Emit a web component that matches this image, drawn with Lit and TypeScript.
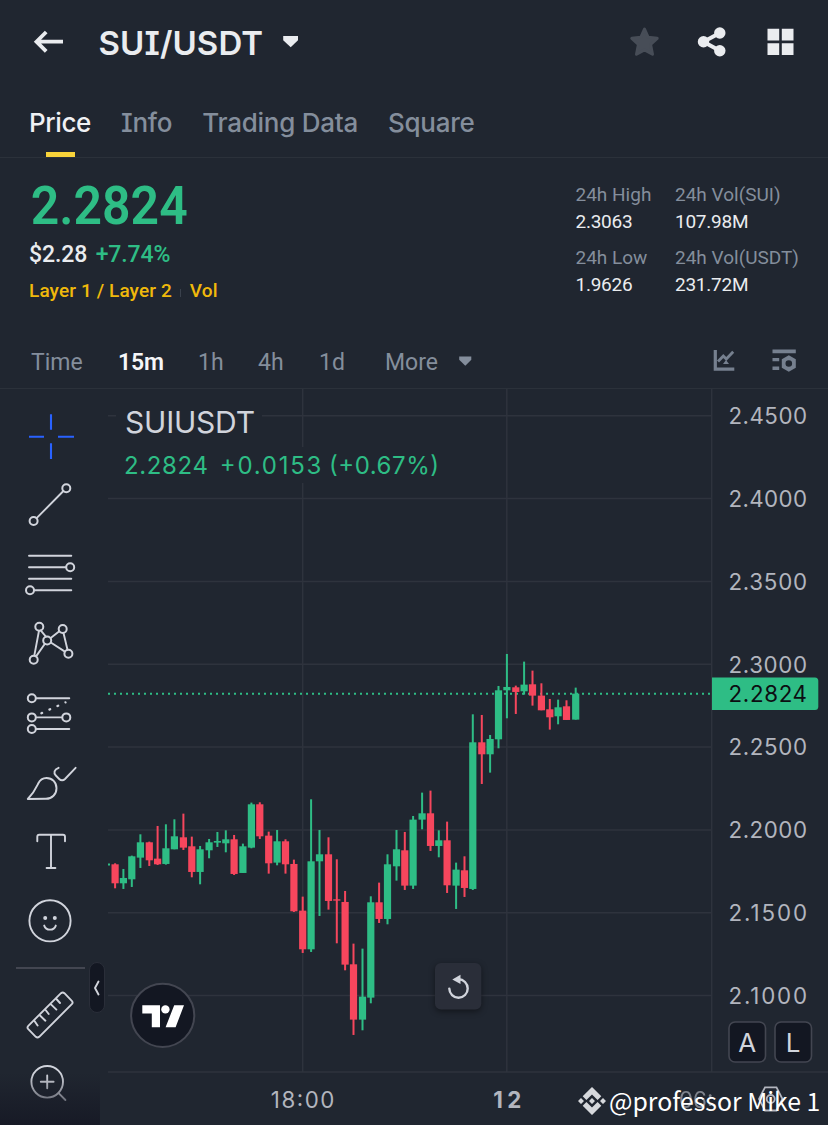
import { LitElement, html, svg, css } from "lit";
import { customElement } from "lit/decorators.js";

type Candle = [number, number, number, number, number, number];

// x centre, high, body top, body bottom, low, direction.
// Vertical values are in thirds of a pixel below the 2.23 price level.
const CANDLES: Candle[] = [
  [115, 249, 252, 309, 324, 0], [123.3, 266, 293, 309, 326, 1], [131.7, 226, 228, 297, 320, 1],
  [140.3, 162, 186, 232, 263, 1], [149.2, 184, 186, 240, 257, 0], [157.5, 137, 235, 252, 254, 0],
  [165.8, 132, 204, 251, 253, 1], [174.3, 117, 168, 207, 207, 1], [183.3, 100, 171, 202, 209, 0],
  [191.7, 169, 198, 275, 291, 0], [200, 197, 207, 275, 312, 1], [209, 176, 186, 210, 234, 1],
  [217.3, 155, 182, 187, 200, 1], [225.7, 150, 177, 189, 216, 1], [234, 164, 177, 281, 284, 0],
  [242.8, 190, 198, 278, 278, 1], [251.3, 67, 72, 202, 204, 1], [259.7, 66, 72, 168, 176, 0],
  [268.6, 154, 166, 249, 280, 0], [277, 149, 183, 247, 255, 1], [285.4, 177, 183, 252, 280, 0],
  [293.8, 238, 251, 393, 395, 0], [302.6, 349, 391, 507, 518, 0], [311, 57, 243, 507, 515, 1],
  [319.4, 149, 222, 243, 407, 1], [328.4, 171, 222, 362, 388, 0], [336.7, 237, 357, 361, 489, 0],
  [345, 332, 365, 553, 570, 0], [353.4, 490, 552, 718, 764, 0], [362.4, 505, 649, 718, 750, 1],
  [370.7, 348, 366, 652, 669, 1], [379, 307, 366, 416, 428, 0], [387.4, 222, 252, 416, 432, 1],
  [396.4, 149, 207, 258, 301, 1], [404.7, 155, 210, 316, 329, 0], [413, 107, 118, 316, 326, 1],
  [422, 37, 99, 118, 147, 1], [430.4, 31, 99, 197, 212, 0], [438.7, 150, 180, 197, 231, 1],
  [447, 124, 180, 315, 338, 0], [456, 247, 268, 316, 386, 1], [464.4, 228, 270, 323, 350, 0],
  [472.7, -198, -114, 326, 329, 1], [481.7, -196, -114, -78, 11, 0], [490, -136, -124, -78, -23, 1],
  [498.4, -283, -270, -123, -96, 1], [506.8, -379, -280, -270, -186, 1], [515.7, -284, -279, -265, -199, 0],
  [524, -356, -287, -267, -257, 1], [532.4, -329, -288, -254, -224, 0], [541.3, -291, -254, -210, -210, 0],
  [549.7, -244, -213, -189, -152, 0], [558, -242, -219, -192, -168, 1], [566.4, -240, -222, -181, -181, 0],
  [575.6, -278, -260, -182, -182, 1],
];

const PRICES = ["2.4500", "2.4000", "2.3500", "2.3000", "2.2500", "2.2000", "2.1500", "2.1000"];
const gridY = (i: number) => 415.7 + i * 82.84;
const level = (v: number) => 780.3 + v / 3;

const node = (x: number, y: number) => svg`<circle class="node" cx=${x} cy=${y} r="4"/>`;

const TOOLS = [
  svg`<path class="active" d="M51 414.3V429.7M51 443.3V459M29 436.7H44M58 436.7H74"/>`,
  svg`<path d="M36.6 518.2L63.4 491"/>${node(66.3, 488.2)}${node(33.6, 521)}`,
  svg`<path d="M29 555.7H71.3M29 567.3H66M29 578.8H71.3M34 590.3H71.3"/>${node(70.2, 567.3)}${node(30, 590.3)}`,
  svg`<path d="M39 630.7L34.3 655.6M36.1 656.4L44.9 643.7M40.7 630.4L45.9 636.6M50.7 638L59.3 631.3M63.5 633L67.5 649.7M50.8 642.5L64.9 651.6"/>
    ${node(39.3, 626.8)}${node(62.7, 629)}${node(47.2, 640.5)}${node(68.4, 653.7)}${node(33.7, 659.8)}`,
  svg`<path d="M36 698.3H69.3M36 717.4H62M36 729H69.3"/><path class="dots" d="M41.4 713.2L65.5 702.4"/>
    ${node(31.8, 698.3)}${node(31.8, 717.4)}${node(66.3, 717.4)}${node(31.8, 729)}`,
  svg`<path d="M27.8 799C34.5 792 36.5 787 38.2 783.5C40 779.7 43 778 46.5 778C52.3 778 56.5 782.5 56.5 788.2C56.5 794.2 52 798.8 46 798.8ZM58.6 767.8C54 769.6 53.4 773 55.8 775.5L59.2 779C61 780.8 63.3 780.7 65 779L75.6 767.8"/>`,
  svg`<path d="M37.3 841.2V836.8Q37.3 834.8 39.3 834.8H63Q65 834.8 65 836.8V841.2M51 834.8V868M46.6 868H55.4"/>`,
  svg`<circle cx="50" cy="920.8" r="20.6"/><path d="M44.2 925.6C46 931 54 931 55.8 925.6"/>
    <circle class="solid" cx="45.2" cy="918" r="2"/><circle class="solid" cx="54.8" cy="918" r="2"/>`,
];

const LOWER_TOOLS = [
  svg`<path d="M61 993.2Q62.7 991.6 64.4 993.2L71.8 1000.8Q73.4 1002.5 71.8 1004.2L39.2 1036.8Q37.5 1038.4 35.8 1036.8L28.3 1029.2Q26.7 1027.5 28.3 1025.8ZM34.5 1021L37.6 1025.5M40 1015.5L45.4 1020.7M45.6 1010L48.7 1014M51 1004.4L56.4 1009.6M56.4 999L60 1003"/>`,
  svg`<circle cx="47.2" cy="1081.8" r="15.8"/><path d="M40.8 1081.8H53.6M47.2 1075.4V1088.2M58.6 1093.2L65.4 1100"/>`,
];

@customElement("app-root")
export class AppRoot extends LitElement {
  static styles = css`
    :host {
      display: block;
      width: 828px;
      height: 1125px;
      overflow: hidden;
      position: relative;
      background: #202630;
      color: #eaecef;
      font-family: Inter, Roboto, sans-serif;
      font-feature-settings: "cv08" 1;
      white-space: nowrap;
    }
    * { box-sizing: border-box; }
    svg { display: block; flex: none; }
    .header { display: flex; align-items: center; height: 84px; padding: 0 33.5px 0 33px; margin-bottom: 1px; }
    .back { margin-right: 34.5px; }
    .pair { font-size: 33px; font-weight: 600; letter-spacing: 0.1px; width: 184.5px; line-height: 40px; padding-top: 2px; }
    .actions { display: flex; align-items: center; margin-left: auto; }
    .star { margin-right: 37px; }
    .share { margin-right: 39.5px; }
    .tabs { display: flex; height: 73px; padding: 0 29px; gap: 30px; border-bottom: 1.5px solid #2b313a; }
    .tab { position: relative; font-size: 26px; line-height: 76px; font-weight: 500; letter-spacing: -0.25px; color: #848e9c; }
    .first { letter-spacing: -0.4px; color: #f0f1f4; }
    .first::after { content: ""; position: absolute; left: 16.5px; bottom: 0; width: 29px; height: 5px; background: #f8d33a; }
    .summary { display: flex; justify-content: space-between; height: 178px; padding: 18px 29px 0; font-family: Roboto, sans-serif; }
    .last { font-size: 54px; line-height: 60px; font-weight: 600; color: #2ebd85; transform: scaleX(0.925); transform-origin: 24px 50%; }
    .fiat { display: flex; gap: 8.5px; font-size: 23px; line-height: 38px; font-weight: 500; letter-spacing: -0.1px; }
    .up { color: #2ebd85; }
    .tags { display: flex; align-items: center; font-size: 19px; line-height: 34px; font-weight: 500; letter-spacing: 0.12px; color: #f0b90b; }
    .rule { width: 1px; height: 8px; background: #3a414c; margin: 3px 8.5px 0; }
    .stats { display: grid; grid-template-columns: 99.5px 124px; grid-auto-rows: 63px; padding-top: 5px; }
    .stat { font-size: 19px; line-height: 27px; letter-spacing: -0.25px; }
    .name { color: #848e9c; letter-spacing: 0; }
    .intervals { display: flex; align-items: center; height: 53px; padding: 0 31px; font-family: Roboto, sans-serif; font-size: 23px; color: #848e9c; border-bottom: 1.5px solid #2b313a; }
    .w1 { width: 87px; } .w2 { width: 80px; color: #f5f6f8; font-weight: 600; letter-spacing: -0.2px; } .w3 { width: 60px; } .w4 { width: 61px; } .w5 { width: 66px; } .w6 { width: 74px; }
    .drop { margin-bottom: 3px; }
    .modes { display: flex; gap: 37px; margin-left: auto; margin-bottom: 3px; align-items: center; }
    .workspace { display: flex; height: 736px; }
    .tools { width: 108px; height: 736px; padding-top: 13px; position: relative; }
    .tools svg { fill: none; stroke: #d1d4dc; stroke-width: 1.9; stroke-linecap: round; stroke-linejoin: round; }
    .tools .node { stroke-width: 2; }
    .tools .active { stroke: #2962ff; stroke-linecap: butt; stroke-width: 2.1; }
    .tools .dots { stroke-dasharray: 0.8 8; stroke-width: 2.3; }
    .tools .solid { fill: #d1d4dc; stroke: none; }
    .divider { width: 69px; height: 2px; background: #434651; margin: 13px 0 10px 16px; }
    .fade { position: absolute; left: 0; bottom: 0; width: 100px; height: 52px; background: linear-gradient(rgba(19, 23, 34, 0), #171a26); }
    .collapse { position: absolute; left: 89px; top: 573px; width: 16px; height: 51px; border: 1.5px solid #2a2e39; border-radius: 8px; background: #131722; display: flex; align-items: center; justify-content: center; }
    .chart { font-family: Inter, sans-serif; }
    .grid { stroke: #2e333d; stroke-width: 1.5; fill: none; }
    .bg { fill: #202630; }
    .rise { fill: #2ebd85; }
    .fall { fill: #f6465d; }
    .axis { font-size: 22.3px; fill: #b2b5be; }
    .strong { font-weight: 700; }
    .symbol { font-size: 30px; fill: #d1d4dc; font-feature-settings: normal; }
    .change { font-size: 24px; fill: #2ebd85; }
    .quote { stroke: #2ebd85; stroke-width: 2; stroke-dasharray: 2 4; }
    .onquote { font-size: 22.3px; fill: #0c0e12; }
    .key { fill: #131722; stroke: #434651; stroke-width: 1.6; }
    .keytext { font-size: 26px; fill: #d1d4dc; text-anchor: middle; }
    .reload { fill: #2a2e39; filter: drop-shadow(0 2px 3px rgba(0, 0, 0, 0.45)); }
    .reload-icon { fill: none; stroke: #d1d4dc; stroke-width: 2.4; stroke-linecap: round; }
    .light { fill: #d1d4dc; }
    .white { fill: #fff; }
    .logo { fill: #131722; stroke: #434651; stroke-width: 2; }
    .gear { fill: none; stroke: #b2b5be; stroke-width: 1.8; }
    .credit { position: absolute; left: 578px; top: 1080px; height: 40px; display: flex; align-items: center; gap: 3px; color: #fff; font-family: "Noto Sans CJK SC", sans-serif; font-size: 24.8px; line-height: 40px; }
    .mark { margin-top: 2px; }
  `;

  private header() {
    return html`<div class="header">
      <svg class="back" width="31" height="26" viewBox="33 29 31 26" fill="none" stroke="#eaecef" stroke-width="3.8"><path d="M63 41.7H37M46.2 32L36.5 41.7L46.2 51.4"/></svg>
      <div class="pair">SUI/USDT</div>
      <svg width="16" height="14" viewBox="283 35 16 14" fill="#eaecef"><path d="M283.2 36H298V40.3L290.7 47.3L283.2 40.3Z"/></svg>
      <div class="actions">
        <svg class="star" width="31" height="30" viewBox="629.5 27.5 31 30" fill="#474d57" stroke="#474d57" stroke-width="3" stroke-linejoin="round"><path d="M645 29.5L648.7 37.8L657.7 38.8L651.1 45L653 54.8L645 50.4L637 54.8L638.9 45L632.3 38.8L641.3 37.8Z"/></svg>
        <svg class="share" width="30" height="30" viewBox="697 27.5 30 30" fill="#eaecef"><circle cx="703.5" cy="42.3" r="5.7"/><circle cx="719.8" cy="33.5" r="5.7"/><circle cx="719.8" cy="51.3" r="5.7"/><path d="M719.8 33.5L703.5 42.3L719.8 51.3" fill="none" stroke="#eaecef" stroke-width="4"/></svg>
        <svg width="28" height="28" viewBox="766.5 28.5 28 28" fill="#eaecef"><path d="M767 29.2h11.7v11.7h-11.7zM781.3 29.2h11.7v11.7h-11.7zM767 43.7h11.7v11.7h-11.7zM781.3 43.7h11.7v11.7h-11.7z"/></svg>
      </div>
    </div>`;
  }

  private stat(name: string, value: string) {
    return html`<div class="stat"><div class="name">${name}</div><div>${value}</div></div>`;
  }

  private tool(icon: unknown, top: number) {
    return html`<svg width="100" height="69" viewBox="0 ${top} 100 69">${icon}</svg>`;
  }

  private chart() {
    return html`<svg class="chart" width="720" height="736" viewBox="108 389 720 736">
      <path class="grid" d="M302.7 389V1072M506.8 389V1072M711.7 389V1072M108 1072H828"/>
      ${PRICES.map((_, i) => svg`<path class="grid" d="M108 ${gridY(i)}H712"/>`)}
      <rect class="bg" x="116" y="405" width="146" height="35"/>
      <rect class="bg" x="116" y="447" width="331" height="36"/>
      <path class="quote" d="M108 693.8H712"/>
      <rect class="rise" x="108" y="863.5" width="2" height="2"/>
      ${CANDLES.map(([x, hi, top, bottom, lo, up]) => svg`<g class=${up ? "rise" : "fall"}>
        <rect x=${x - 0.9} y=${level(hi)} width="2" height=${(lo - hi) / 3}/>
        <rect x=${x - 3.5} y=${level(top)} width="7.2" height=${(bottom - top) / 3}/></g>`)}
      <text class="symbol" x="125" y="432.9" textLength="130">SUIUSDT</text>
      <text class="change" x="124" y="474.2" textLength="84">2.2824</text>
      <text class="change" x="219.8" y="474.2" textLength="101.5">+0.0153</text>
      <text class="change" x="329" y="474.2" textLength="110">(+0.67%)</text>
      ${PRICES.map((p, i) => svg`<text class="axis" x="728.5" y=${gridY(i) + 8.3} textLength="78.5">${p}</text>`)}
      <path class="rise" d="M712 677.5H815Q818.3 677.5 818.3 681V706.5Q818.3 710 815 710H712Z"/>
      <text class="onquote" x="728.5" y="702" textLength="78.5">2.2824</text>
      <rect class="key" x="729" y="1022" width="36.5" height="40" rx="6"/>
      <rect class="key" x="775" y="1022" width="36.5" height="40" rx="6"/>
      <text class="keytext" x="747.2" y="1052">A</text>
      <text class="keytext" x="793.2" y="1052">L</text>
      <text class="axis" x="270.8" y="1108" textLength="63.5">18:00</text>
      <text class="axis strong" x="493.2" y="1108" textLength="28">12</text>
      <text class="axis" x="679" y="1108" opacity="0.65">06:</text>
      <path class="gear" d="M765 1087.3H776.5L782.5 1099L776.5 1110.5H765L759 1099Z"/><circle class="gear" cx="770.7" cy="1099" r="4"/>
      <rect class="reload" x="435" y="963" width="46.3" height="46.5" rx="6"/>
      <path class="reload-icon" d="M449.3 988.6A9.2 9.2 0 1 0 458.5 979.3"/><path class="light" d="M452.3 979.6L460.5 974.8V984Z"/>
      <circle class="logo" cx="162.7" cy="1015.3" r="31.6"/>
      <path class="white" d="M142.3 1005.3H160V1027.2H151.8V1013.6H142.3ZM174.2 1005.3H184L175.6 1027.2H165.6Z"/><circle class="white" cx="165.4" cy="1009.4" r="4.2"/>
    </svg>`;
  }

  render() {
    return html`
      ${this.header()}
      <div class="tabs">
        <div class="tab first">Price</div><div class="tab">Info</div><div class="tab">Trading Data</div><div class="tab">Square</div>
      </div>
      <div class="summary">
        <div>
          <div class="last">2.2824</div>
          <div class="fiat"><span>$2.28</span><span class="up">+7.74%</span></div>
          <div class="tags"><span>Layer 1 / Layer 2</span><span class="rule"></span><span>Vol</span></div>
        </div>
        <div class="stats">
          ${this.stat("24h High", "2.3063")}${this.stat("24h Vol(SUI)", "107.98M")}
          ${this.stat("24h Low", "1.9626")}${this.stat("24h Vol(USDT)", "231.72M")}
        </div>
      </div>
      <div class="intervals">
        <span class="w1">Time</span><span class="w2">15m</span><span class="w3">1h</span>
        <span class="w4">4h</span><span class="w5">1d</span><span class="w6">More</span>
        <svg class="drop" width="13" height="10" viewBox="459 355 13 10" fill="#848e9c"><path d="M459.2 355.5H471.3V358.8L465.3 364.7L459.2 358.8Z"/></svg>
        <div class="modes">
          <svg width="22" height="23" viewBox="713 349 22 23" fill="none" stroke="#76808f" stroke-width="3.2"><path d="M715.3 350V369.2H734.3"/><path d="M718 361.5L723.3 356L726.3 359L733.2 351.8" stroke-width="2.8"/><path d="M726 360L729 364H723Z" stroke="none" fill="#76808f"/></svg>
          <svg width="25" height="23" viewBox="771.5 349.5 25 23" fill="#76808f"><path d="M772 350H795.3V353.7H772ZM772 358.4H778.7V361.8H772ZM772 367H778.7V370.4H772Z"/><path fill-rule="evenodd" d="M788.3 355.8L795.3 359.7V368.3L788.3 372.2L781.3 368.3V359.7ZM788.3 360.7A3.3 3.3 0 1 0 788.3 367.3A3.3 3.3 0 1 0 788.3 360.7Z"/></svg>
        </div>
      </div>
      <div class="workspace">
        <div class="tools">
          ${TOOLS.map((t, i) => this.tool(t, 402 + i * 69))}
          <div class="divider"></div>
          ${LOWER_TOOLS.map((t, i) => this.tool(t, 979 + i * 69))}
          <div class="fade"></div>
          <div class="collapse"><svg width="8" height="16" viewBox="0 0 8 16"><path d="M5.5 1.5L2 8L5.5 14.5"/></svg></div>
        </div>
        ${this.chart()}
      </div>
      <div class="credit">
        <svg class="mark" width="28" height="30" viewBox="578 1086 28 30" fill="#d6d8dc"><path d="M592 1087L601.3 1096.3L597.6 1100L592 1094.4L586.4 1100L582.7 1096.3ZM592 1115L582.7 1105.7L586.4 1102L592 1107.6L597.6 1102L601.3 1105.7ZM592 1098L595 1101L592 1104L589 1101ZM581 1098L584 1101L581 1104L578 1101ZM603 1098L606 1101L603 1104L600 1101Z"/></svg>
        <span>@professor Mike 1</span>
      </div>`;
  }
}
